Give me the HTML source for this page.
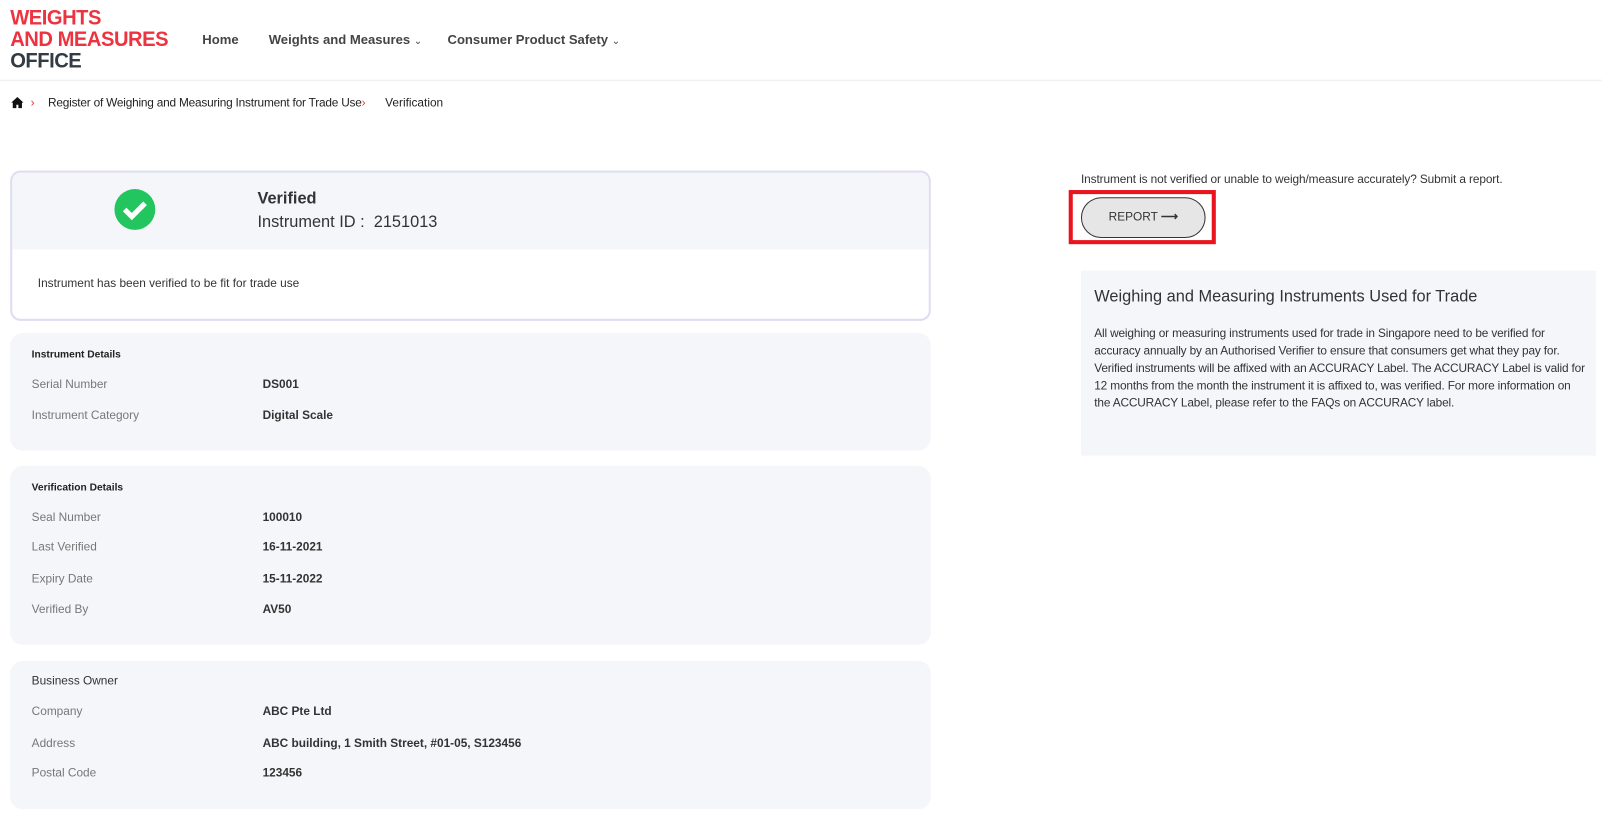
<!DOCTYPE html><html><head><style>
*{margin:0;padding:0;box-sizing:border-box}
body{width:1602px;height:818px;background:#fff;overflow:hidden}
#w{width:1568px;height:801px;position:relative;transform:scale(1.0217);transform-origin:0 0;font-family:"Liberation Sans",sans-serif;color:#222;font-size:11.6px}
.a{position:absolute}
.hdr{position:absolute;left:0;top:0;width:1568px;height:79px;border-bottom:1px solid #eee;box-shadow:0 1px 3px rgba(0,0,0,.04)}
.logo{position:absolute;left:10px;top:7px;font-weight:bold;font-size:21px;line-height:21px;letter-spacing:-0.5px;transform:scaleX(.94);transform-origin:left}
.nav{position:absolute;top:31px;font-size:12.8px;color:#444;font-weight:bold}
.card{position:absolute;left:10px;width:901px;background:#f5f6fa;border-radius:12px}
.lab{position:absolute;left:21px;color:#777}
.val{position:absolute;left:247px;font-weight:bold;color:#333}
</style></head><body><div id="w">
<div class="hdr">
<div class="logo"><span style="color:#ee3340">WEIGHTS<br>AND MEASURES</span><br><span style="color:#333c44">OFFICE</span></div>
<div class="nav" style="left:198px">Home</div>
<div class="nav" style="left:263px">Weights and Measures <span style="font-weight:normal;font-size:10px">&#8964;</span></div>
<div class="nav" style="left:438px">Consumer Product Safety <span style="font-weight:normal;font-size:10px">&#8964;</span></div>
</div>
<svg class="a" style="left:11px;top:95px" width="12" height="11" viewBox="0 0 12 11"><path d="M6 0L0 5.5h1.5V11h3.5V7.5h2V11h3.5V5.5H12z" fill="#111"/></svg>
<div class="a" style="left:30px;top:94px;color:#e33">›</div>
<div class="a" style="left:47px;top:94px;letter-spacing:-0.2px">Register of Weighing and Measuring Instrument for Trade Use<span style="color:#e33">›</span></div>
<div class="a" style="left:377px;top:94px">Verification</div>

<div class="a" style="left:10px;top:167px;width:901px;height:147px;border:2px solid #dedcf2;border-radius:10px;overflow:hidden">
<div style="height:75px;background:#f5f6fa"></div>
<svg class="a" style="left:99px;top:15px" width="42" height="42"><circle cx="21" cy="21" r="20" fill="#22c55e"/><path d="M11 21l7 7 13-13" stroke="#fff" stroke-width="5" fill="none"/></svg>
<div class="a" style="left:240px;top:17px;font-size:16px;font-weight:bold;color:#333">Verified</div>
<div class="a" style="left:240px;top:40px;font-size:16px;color:#333">Instrument ID :&nbsp; 2151013</div>
<div class="a" style="left:25px;top:102px;color:#333">Instrument has been verified to be fit for trade use</div>
</div>

<div class="card" style="top:326px;height:115px">
<div class="a" style="left:21px;top:16px;font-size:10px;font-weight:bold">Instrument Details</div>
<div class="lab" style="top:44px">Serial Number</div><div class="val" style="top:44px">DS001</div>
<div class="lab" style="top:74px">Instrument Category</div><div class="val" style="top:74px">Digital Scale</div>
</div>
<div class="card" style="top:456px;height:175px">
<div class="a" style="left:21px;top:16px;font-size:10px;font-weight:bold">Verification Details</div>
<div class="lab" style="top:44px">Seal Number</div><div class="val" style="top:44px">100010</div>
<div class="lab" style="top:73px">Last Verified</div><div class="val" style="top:73px">16-11-2021</div>
<div class="lab" style="top:104px">Expiry Date</div><div class="val" style="top:104px">15-11-2022</div>
<div class="lab" style="top:134px">Verified By</div><div class="val" style="top:134px">AV50</div>
</div>
<div class="card" style="top:647px;height:145px">
<div class="a" style="left:21px;top:13px;color:#333">Business Owner</div>
<div class="lab" style="top:43px">Company</div><div class="val" style="top:43px">ABC Pte Ltd</div>
<div class="lab" style="top:74px">Address</div><div class="val" style="top:74px">ABC building, 1 Smith Street, #01-05, S123456</div>
<div class="lab" style="top:103px">Postal Code</div><div class="val" style="top:103px">123456</div>
</div>

<div class="a" style="left:1058px;top:169px;color:#333;letter-spacing:-0.1px">Instrument is not verified or unable to weigh/measure accurately? Submit a report.</div>
<div class="a" style="left:1046px;top:186px;width:144px;height:53px;border:4px solid #e8151f"></div>
<div class="a" style="left:1058px;top:193px;width:122px;height:40px;border:1px solid #333;border-radius:20px;background:#e6e6e6;text-align:center;line-height:38px;color:#333">REPORT <span style="font-weight:bold">⟶</span></div>

<div class="a" style="left:1058px;top:265px;width:504px;height:181px;background:#f5f6fa">
<div class="a" style="left:13px;top:17px;font-size:16px;color:#333">Weighing and Measuring Instruments Used for Trade</div>
<div class="a" style="left:13px;top:53px;width:484px;line-height:17px;color:#333;letter-spacing:-0.15px">All weighing or measuring instruments used for trade in Singapore need to be verified for accuracy annually by an Authorised Verifier to ensure that consumers get what they pay for. Verified instruments will be affixed with an ACCURACY Label. The ACCURACY Label is valid for 12 months from the month the instrument it is affixed to, was verified. For more information on the ACCURACY Label, please refer to the FAQs on ACCURACY label.</div>
</div>
</div></body></html>
